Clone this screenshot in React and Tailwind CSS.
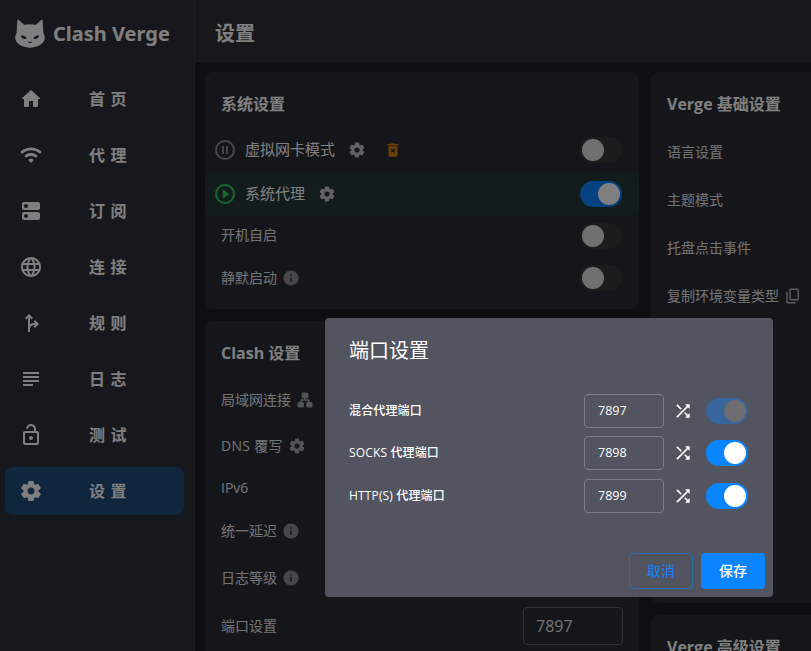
import React from "react";
import { MdForkRight, MdInfo, MdLanguage, MdShuffle, MdSubject } from "react-icons/md";
import clsx from "clsx";

// ── Icons ──────────────────────────────────────────────────────────────────
const Icon = ({ d, size = 24, className, children }) => (
  <svg
    viewBox="0 0 24 24"
    width={size}
    height={size}
    fill="currentColor"
    className={clsx("shrink-0", className)}
  >
    {d && <path d={d} />}
    {children}
  </svg>
);

const HOME =
  "M10 19v-5h4v5c0 .55.45 1 1 1h3c.55 0 1-.45 1-1v-7h1.7c.46 0 .68-.57.33-.87L12.67 3.6c-.38-.34-.96-.34-1.34 0l-8.36 7.53c-.34.3-.13.87.33.87H5v7c0 .55.45 1 1 1h3c.55 0 1-.45 1-1z";
const WIFI =
  "M2.06 10.06c.51.51 1.32.56 1.87.1 4.67-3.84 11.45-3.84 16.13-.01.56.46 1.38.42 1.89-.09.59-.59.55-1.57-.1-2.1-5.71-4.67-13.97-4.67-19.69 0-.65.52-.7 1.5-.1 2.1zm7.76 7.76 1.47 1.47c.39.39 1.02.39 1.41 0l1.47-1.47c.47-.47.37-1.28-.23-1.59-1.22-.63-2.68-.63-3.91 0-.57.31-.68 1.12-.21 1.59zm-3.73-3.73c.49.49 1.26.54 1.83.13 2.44-1.73 5.72-1.73 8.16 0 .57.4 1.34.36 1.83-.13l.01-.01c.6-.6.56-1.62-.13-2.11-3.44-2.49-8.13-2.49-11.58 0-.69.5-.73 1.51-.12 2.12z";
const DNS =
  "M19 13H5c-1.1 0-2 .9-2 2v4c0 1.1.9 2 2 2h14c1.1 0 2-.9 2-2v-4c0-1.1-.9-2-2-2zM7 19c-1.1 0-2-.9-2-2s.9-2 2-2 2 .9 2 2-.9 2-2 2zM19 3H5c-1.1 0-2 .9-2 2v4c0 1.1.9 2 2 2h14c1.1 0 2-.9 2-2V5c0-1.1-.9-2-2-2zM7 9c-1.1 0-2-.9-2-2s.9-2 2-2 2 .9 2 2-.9 2-2 2z";
const LOCK_OPEN =
  "M12 13c-1.1 0-2 .9-2 2s.9 2 2 2 2-.9 2-2-.9-2-2-2zm6-5h-1V6c0-2.76-2.24-5-5-5-2.28 0-4.27 1.54-4.84 3.75-.14.54.18 1.08.72 1.22.53.14 1.08-.18 1.22-.72C9.44 3.93 10.63 3 12 3c1.65 0 3 1.35 3 3v2H6c-1.1 0-2 .9-2 2v10c0 1.1.9 2 2 2h12c1.1 0 2-.9 2-2V10c0-1.1-.9-2-2-2zm0 11c0 .55-.45 1-1 1H7c-.55 0-1-.45-1-1v-8c0-.55.45-1 1-1h10c.55 0 1 .45 1 1z";
const SETTINGS =
  "M19.5 12c0-.23-.01-.45-.03-.68l1.86-1.41c.4-.3.51-.86.26-1.3l-1.87-3.23c-.25-.44-.79-.62-1.25-.42l-2.15.91c-.37-.26-.76-.49-1.17-.68l-.29-2.31c-.06-.5-.49-.88-.99-.88h-3.73c-.51 0-.94.38-1 .88l-.29 2.31c-.41.19-.8.42-1.17.68l-2.15-.91c-.46-.2-1-.02-1.25.42L2.41 8.62c-.25.44-.14.99.26 1.3l1.86 1.41c-.02.22-.03.44-.03.67s.01.45.03.68l-1.86 1.41c-.4.3-.51.86-.26 1.3l1.87 3.23c.25.44.79.62 1.25.42l2.15-.91c.37.26.76.49 1.17.68l.29 2.31c.06.5.49.88.99.88h3.73c.5 0 .93-.38.99-.88l.29-2.31c.41-.19.8-.42 1.17-.68l2.15.91c.46.2 1 .02 1.25-.42l1.87-3.23c.25-.44.14-.99-.26-1.3l-1.86-1.41c.03-.23.04-.45.04-.68zm-7.46 3.5c-1.93 0-3.5-1.57-3.5-3.5s1.57-3.5 3.5-3.5 3.5 1.57 3.5 3.5-1.57 3.5-3.5 3.5z";
const COPY =
  "M15 20H5V7c0-.55-.45-1-1-1s-1 .45-1 1v13c0 1.1.9 2 2 2h10c.55 0 1-.45 1-1s-.45-1-1-1zm5-4V4c0-1.1-.9-2-2-2H9c-1.1 0-2 .9-2 2v12c0 1.1.9 2 2 2h9c1.1 0 2-.9 2-2zm-2 0H9V4h9v12z";

const Gear = ({ size = 18, className }) => (
  <Icon d={SETTINGS} size={size} className={className} />
);

const PauseCircle = () => (
  <Icon className="text-[#8f8f93]">
    <circle cx="12" cy="12" r="9" fill="none" stroke="currentColor" strokeWidth="2" />
    <path d="M9 8h2v8H9zM13 8h2v8h-2z" />
  </Icon>
);

const PlayCircle = () => (
  <Icon className="text-[#2fd158]">
    <circle cx="12" cy="12" r="9" fill="none" stroke="currentColor" strokeWidth="2" />
    <path d="M9.7 8.2v7.6c0 .4.5.6.8.4l5.1-3.8a.5.5 0 0 0 0-.8l-5.1-3.8c-.3-.2-.8 0-.8.4z" />
  </Icon>
);

const Trash = () => (
  <Icon size={18} className="text-[#d9820a]">
    <path
      fillRule="evenodd"
      d="M6 19c0 1.1.9 2 2 2h8c1.1 0 2-.9 2-2V7H6zm3-7.6 1.4-1.4 1.6 1.6 1.6-1.6 1.4 1.4-1.6 1.6 1.6 1.6-1.4 1.4-1.6-1.6-1.6 1.6L9 14.600l1.600-1.600zM15.500 4l-.7-.7a1 1 0 0 0-.7-.3H9.900a1 1 0 0 0-.7.3l-.7.7H5v2h14V4z"
    />
  </Icon>
);

const Lan = () => (
  <Icon size={18} className="text-[#a9a9ac]">
    <rect x="7.500" y="2" width="9" height="7.500" rx="2" />
    <rect x="2" y="14.500" width="8.500" height="7.500" rx="2" />
    <rect x="13.500" y="14.500" width="8.500" height="7.500" rx="2" />
    <path d="M11 9h2v2h4a1 1 0 0 1 1 1v3h-2v-2H8v2H6v-3a1 1 0 0 1 1-1h4z" />
  </Icon>
);

const Logo = () => (
  <svg viewBox="0 0 30 29" width="30" height="29" fill="#fff" className="shrink-0">
    <path
      fillRule="evenodd"
      d="M2.4 1.300C2.400.5 3 .2 3.600.7L9 5.800C13 5 17 5 21 5.800L26.400.7c.6-.5 1.200-.2 1.200.6l.8 12.700c.9 1.500 1.400 3 1.400 4.600C29.800 24.500 23 28.700 15 28.700S.2 24.500.2 18.600c0-1.600.5-3.100 1.400-4.600zM6 16.600c.1 2.600 2.600 4.200 5.400 3.200.3-2-2.200-3.400-5.400-3.200zM24 16.600c-3.200-.2-5.700 1.200-5.400 3.200 2.800 1 5.300-.6 5.400-3.200zM12.900 22.600c.3 1.200 1.200 1.700 2.100 1.700s1.800-.5 2.100-1.700l-2.100.4z"
    />
  </svg>
);

// ── Controls ───────────────────────────────────────────────────────────────
const Switch = ({ on, disabled }) => (
  <span
    className={clsx(
      "flex h-[26px] w-[42px] shrink-0 items-center rounded-full p-[2px]",
      on ? "justify-end" : "justify-start",
      on ? (disabled ? "bg-[#37659c]" : "bg-[#0a84ff]") : "bg-[#39393b]"
    )}
  >
    <span
      className={clsx(
        "size-[22px] rounded-full",
        on ? (disabled ? "bg-[#6e6d71]" : "bg-white") : "bg-[#e0e0e0]"
      )}
    />
  </span>
);

const Card = ({ title, className, children }) => (
  <section className={clsx("shrink-0 rounded-lg bg-[#292c34] pt-[10px]", className)}>
    <h2 className="flex h-[46px] items-center px-4 pb-[2px] text-base font-bold">{title}</h2>
    {children}
  </section>
);

const Row = ({ label, icon, className, children }) => (
  <div className={clsx("flex items-center justify-between px-4 text-sm", className)}>
    <span className="flex items-center gap-[5px] text-[#e6e6e8]">
      {label}
      {icon}
    </span>
    {children}
  </div>
);

const info = <MdInfo size={18} className="text-[#8f8f93]" />;

// ── Data ───────────────────────────────────────────────────────────────────
const menu = [
  { label: "首页", icon: <Icon d={HOME} /> },
  { label: "代理", icon: <Icon d={WIFI} /> },
  { label: "订阅", icon: <Icon d={DNS} /> },
  { label: "连接", icon: <MdLanguage size={24} /> },
  { label: "规则", icon: <MdForkRight size={24} /> },
  { label: "日志", icon: <MdSubject size={24} /> },
  { label: "测试", icon: <Icon d={LOCK_OPEN} /> },
  { label: "设置", icon: <Gear size={24} />, active: true },
];

const ports = [
  { label: "混合代理端口", value: "7897", disabled: true },
  { label: "SOCKS 代理端口", value: "7898" },
  { label: "HTTP(S) 代理端口", value: "7899" },
];

// ── Sections ───────────────────────────────────────────────────────────────
const Sidebar = () => (
  <aside className="h-full w-[195px] shrink-0 border-r border-[#3a3b42] bg-[#2f313a]">
    <div className="flex h-[67px] items-center gap-2 pl-[15px]">
      <Logo />
      <span className="font-['Noto_Sans'] text-[20px] font-bold whitespace-nowrap">
        Clash Verge
      </span>
    </div>
    <nav className="flex flex-col gap-2 pt-2 pl-[5px]">
      {menu.map((m) => (
        <div
          key={m.label}
          className={clsx(
            "flex h-12 w-[179px] items-center rounded-lg pl-[14px]",
            m.active && "bg-[#204a7c]"
          )}
        >
          {m.icon}
          <span className="ml-[46px] text-base font-bold tracking-[5.500px]">{m.label}</span>
        </div>
      ))}
    </nav>
  </aside>
);

const SystemCard = () => (
  <Card title="系统设置" className="h-[237px]">
    <div className="flex h-11 items-center pr-[17px] pl-2 text-[15px]">
      <PauseCircle />
      <span className="ml-2 pb-[2px]">虚拟网卡模式</span>
      <Gear className="ml-[13px] text-[#c4c4c6]" />
      <span className="ml-[18px]">
        <Trash />
      </span>
      <span className="ml-auto">
        <Switch />
      </span>
    </div>
    <div className="flex h-11 items-center rounded-lg bg-[#27383a] pr-[17px] pl-2 text-[15px]">
      <PlayCircle />
      <span className="ml-2 pb-[2px]">系统代理</span>
      <Gear className="ml-[13px] text-[#c4c4c6]" />
      <span className="ml-auto">
        <Switch on />
      </span>
    </div>
    <Row label={<span className="pb-[2px]">开机自启</span>} className="h-10 pr-[17px]">
      <Switch />
    </Row>
    <Row label="静默启动" icon={info} className="h-11 pr-[17px]">
      <Switch />
    </Row>
  </Card>
);

const ClashCard = () => (
  <Card title="Clash 设置" className="h-[400px]">
    <Row label="局域网连接" icon={<Lan />} className="h-[46px]" />
    <Row
      label={<span className="tracking-[0.300px]">DNS 覆写</span>}
      icon={<Gear className="text-[#a9a9ac]" />}
      className="h-[46px]"
    />
    <Row label="IPv6" className="h-[38px]" />
    <Row label="统一延迟" icon={info} className="h-[47px]" />
    <Row label="日志等级" icon={info} className="h-12" />
    <Row label="端口设置" className="h-12">
      <span className="flex h-[38px] w-[100px] items-center rounded border border-[#5e5f68] pl-3 text-base text-[#e6e6e8]">
        7897
      </span>
    </Row>
  </Card>
);

const PortDialog = () => (
  <div className="absolute top-[318px] left-[325px] flex h-[279px] w-[448px] flex-col rounded bg-[#52545f]">
    <h2 className="flex h-16 shrink-0 items-center px-6 pt-px text-xl">端口设置</h2>
    <div className="flex flex-col px-6 pt-2">
      {ports.map((p) => (
        <div key={p.value} className="flex h-[42px] items-center text-xs last:h-11">
          <span className="font-medium tracking-[0.150px]">{p.label}</span>
          <span className="ml-auto flex h-[34px] w-20 items-center rounded border border-[#7b7d86] pl-[13px] text-[12.500px] font-medium">
            {p.value}
          </span>
          <MdShuffle size={20} className="ml-[9px]" />
          <span className="mr-px ml-[13px]">
            <Switch on disabled={p.disabled} />
          </span>
        </div>
      ))}
    </div>
    <div className="mt-auto flex justify-end gap-2 p-2 text-sm">
      <button className="h-9 w-16 rounded border border-[#2e6cb3] text-[#0a84ff]">取消</button>
      <button className="h-9 w-16 rounded bg-[#0a84ff] font-medium text-white">保存</button>
    </div>
  </div>
);

export default function App() {
  return (
    <div className="relative flex h-[651px] w-[811px] overflow-hidden bg-[#1e1d25] font-['Open_Sans','Noto_Sans_CJK_SC',sans-serif] text-white">
      <Sidebar />
      <main className="flex min-w-0 flex-1 flex-col">
        <header className="flex h-[62px] shrink-0 items-center border-b border-[#3a3b42] bg-[#302e32] px-5 pt-[6px] text-xl font-bold">
          设置
        </header>
        <div className="flex gap-3 pt-[10px] pl-[10px]">
          <div className="flex w-[434px] shrink-0 flex-col gap-3">
            <SystemCard />
            <ClashCard />
          </div>
          <div className="flex w-[434px] shrink-0 flex-col gap-3">
            <Card title="Verge 基础设置" className="h-[531px]">
              <Row label="语言设置" className="h-12" />
              <Row label="主题模式" className="h-12" />
              <Row label="托盘点击事件" className="h-12" />
              <Row
                label="复制环境变量类型"
                icon={<Icon d={COPY} size={18} className="text-[#b4b4b6]" />}
                className="h-12"
              />
            </Card>
            <Card title="Verge 高级设置" className="h-[300px]" />
          </div>
        </div>
      </main>

      {/* Backdrop */}
      <div className="absolute inset-0 bg-black/50" />
      <PortDialog />
    </div>
  );
}
